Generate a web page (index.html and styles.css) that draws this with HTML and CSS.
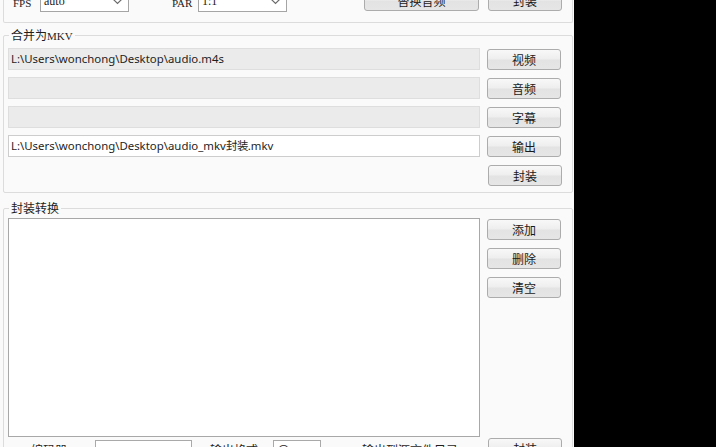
FILE: index.html
```html
<!DOCTYPE html>
<html lang="zh-CN">
<head>
<meta charset="utf-8">
<title>封装</title>
<link rel="stylesheet" href="styles.css">
</head>
<body>
<div class="screen">
  <div class="window">
    <div class="group g1">
      <div class="toprow">
        <span class="lbl">FPS</span>
        <div class="combo">
          <span class="combo-text">auto</span>
          <svg class="chev" width="11" height="7" viewBox="0 0 11 7"><path d="M0.5 0.5 L5.5 5.5 L10.5 0.5" fill="none" stroke="#6a6a6a" stroke-width="1.2"/></svg>
        </div>
        <span class="lbl lbl-par">PAR</span>
        <div class="combo">
          <span class="combo-text">1:1</span>
          <svg class="chev" width="11" height="7" viewBox="0 0 11 7"><path d="M0.5 0.5 L5.5 5.5 L10.5 0.5" fill="none" stroke="#6a6a6a" stroke-width="1.2"/></svg>
        </div>
        <div class="spacer"></div>
        <div class="btn btn-wide">替换音频</div>
        <div class="btn">封装</div>
      </div>
    </div>

    <fieldset class="group g2">
      <legend>合并为<span class="mkv">MKV</span></legend>
      <div class="rows">
        <div class="row"><div class="field">L:\Users\wonchong\Desktop\audio.m4s</div><div class="btn">视频</div></div>
        <div class="row"><div class="field"></div><div class="btn">音频</div></div>
        <div class="row"><div class="field"></div><div class="btn">字幕</div></div>
        <div class="row"><div class="field white">L:\Users\wonchong\Desktop\audio_mkv封装.mkv</div><div class="btn">输出</div></div>
        <div class="row row-end"><div class="btn">封装</div></div>
      </div>
    </fieldset>

    <fieldset class="group g3">
      <legend>封装转换</legend>
      <div class="listarea">
        <div class="listbox"></div>
        <div class="side">
          <div class="btn">添加</div>
          <div class="btn">删除</div>
          <div class="btn">清空</div>
        </div>
      </div>
      <div class="bottomrow">
        <span class="blbl blbl-enc">编码器</span>
        <div class="binput binput-enc"></div>
        <span class="blbl blbl-fmt">输出格式</span>
        <div class="binput binput-fmt">@</div>
        <span class="blbl blbl-src">输出到源文件目录</span>
        <div class="btn btn-push">封装</div>
      </div>
    </fieldset>
  </div>
  <div class="void"></div>
</div>
</body>
</html>
```

FILE: styles.css
```css
html, body {
  margin: 0;
  padding: 0;
  background: #000;
}

.screen {
  display: flex;
  width: 716px;
  height: 447px;
  overflow: hidden;
}

.window {
  width: 574px;
  height: 447px;
  flex: none;
  overflow: hidden;
  background: #fafafa;
  font-family: "Noto Sans CJK SC", "Noto Sans", sans-serif;
  font-size: 12px;
  color: #1e1e1e;
}

.void {
  flex: 1;
  background: #000;
}

.group {
  border: 1px solid #dcdcdc;
  border-radius: 2px;
  margin-left: 3px;
  margin-right: 1px;
}

/* top group (scrolled off) */
.g1 {
  margin-top: -10px;
  border-top: none;
  padding: 0 10px 10px 9px;
}

.toprow {
  display: flex;
  align-items: center;
  height: 22px;
}

.lbl {
  width: 27px;
  font-family: "Liberation Serif", serif;
  font-size: 11px;
  padding-top: 3px;
  color: #222;
}

.lbl-par {
  margin-left: 43px;
  width: 26px;
}

.combo {
  width: 89px;
  height: 22px;
  box-sizing: border-box;
  border: 1px solid #a5a5a5;
  background: #fff;
  display: flex;
  align-items: center;
  padding: 0 5px 0 3px;
}

.combo-text {
  flex: 1;
  font-family: "Liberation Serif", serif;
  font-size: 12px;
  color: #222;
}

.chev {
  display: block;
}

.spacer {
  flex: 1;
}

.btn {
  width: 74px;
  height: 21px;
  box-sizing: border-box;
  flex: none;
  border: 1px solid #acacac;
  border-radius: 3px;
  background: linear-gradient(#f8f8f8 0%, #eeeeee 48%, #e3e3e3 52%, #e6e6e6 100%);
  display: flex;
  align-items: center;
  justify-content: center;
  font-size: 12px;
  line-height: 1;
  color: #1a1a1a;
}

.toprow .btn {
  align-self: flex-start;
}

.btn-wide {
  width: 115px;
  margin-right: 9px;
}

/* fieldset groups */
fieldset.group {
  min-width: 0;
  min-inline-size: 0;
}

legend {
  margin-left: 1px;
  padding: 0 2px;
  font-size: 12px;
  line-height: 14px;
  color: #1e1e1e;
}

.mkv {
  font-family: "Liberation Serif", serif;
  font-size: 11px;
}

.g2 {
  margin-top: 5px;
  padding: 5px 10px 6px 4px;
}

.rows {
  display: flex;
  flex-direction: column;
  gap: 7px;
}

.row {
  display: flex;
  align-items: flex-end;
  gap: 7px;
  height: 22px;
}

.row-end {
  justify-content: flex-end;
}

.field {
  width: 472px;
  height: 22px;
  box-sizing: border-box;
  flex: none;
  border: 1px solid #dedede;
  background: #ebebeb;
  padding-left: 2px;
  font-family: "Noto Sans", sans-serif;
  font-size: 11.4px;
  line-height: 19px;
  color: #1e1e1e;
  white-space: nowrap;
  overflow: hidden;
}

.field.white {
  background: #fff;
  border-color: #cdcdcd;
}

.g3 {
  margin-top: 8px;
  padding: 3px 10px 0 4px;
}

.listarea {
  display: flex;
  gap: 7px;
  align-items: flex-start;
}

.listbox {
  width: 472px;
  height: 219px;
  box-sizing: border-box;
  flex: none;
  border: 1px solid #a8a8a8;
  background: #fff;
}

.side {
  display: flex;
  flex-direction: column;
  gap: 8px;
  margin-top: 1px;
}

.bottomrow {
  display: flex;
  align-items: flex-start;
  height: 22px;
  margin-top: 1px;
}

.blbl {
  line-height: 20px;
  padding-top: 2px;
  color: #1e1e1e;
  white-space: nowrap;
}

.blbl-enc {
  margin-left: 23px;
  width: 64px;
}

.blbl-fmt {
  margin-left: 18px;
  width: 63px;
}

.blbl-src {
  margin-left: 41px;
}

.binput {
  height: 20px;
  box-sizing: border-box;
  margin-top: 2px;
  border: 1px solid #a9a9a9;
  background: #fff;
  font-family: "Liberation Sans", sans-serif;
  font-size: 12px;
  line-height: 18px;
  padding-left: 3px;
}

.binput-enc {
  width: 97px;
}

.binput-fmt {
  width: 48px;
}

.btn-push {
  margin-left: auto;
}
```
